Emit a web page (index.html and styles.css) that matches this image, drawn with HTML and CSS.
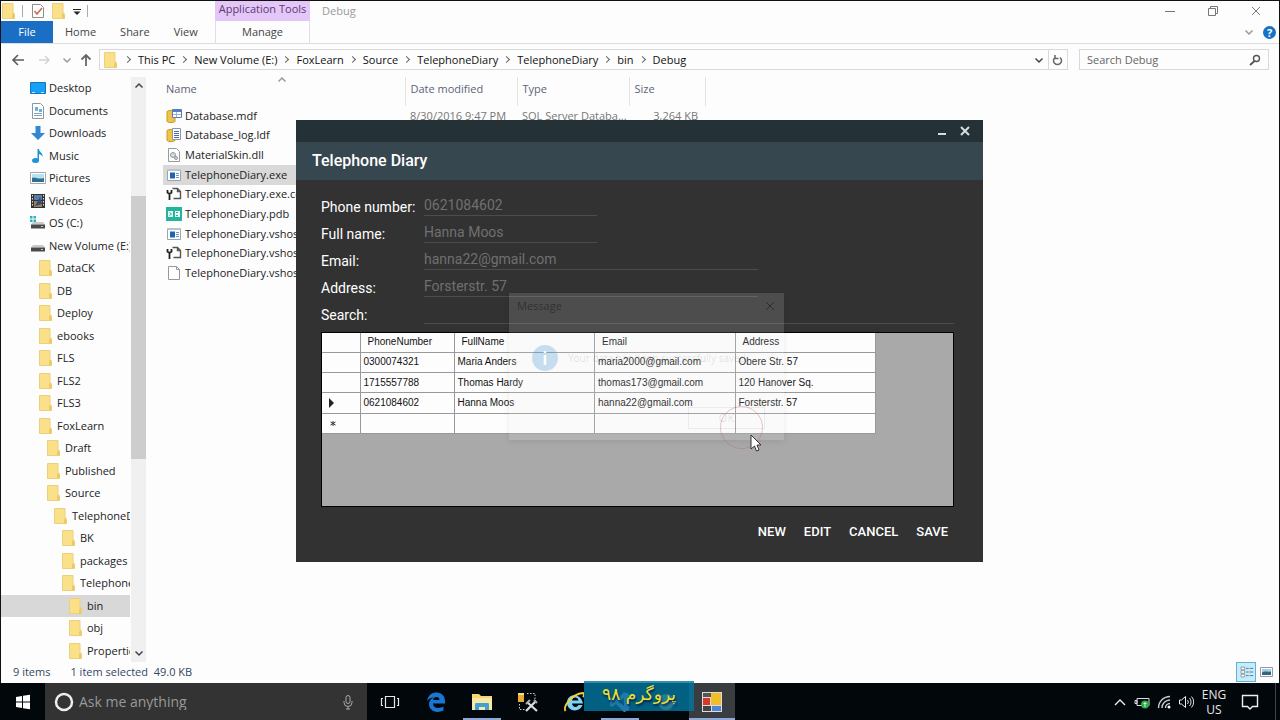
FILE: index.html
```html
<!DOCTYPE html>
<html lang="en">
<head>
    <meta charset="UTF-8">
    <meta name="viewport" content="width=device-width, initial-scale=1.0">
    <title>Telephone Diary</title>
    <link rel="stylesheet" href="styles.css">
</head>
<body>
    <svg class="sprite" aria-hidden="true">
        <symbol id="folder" viewBox="0 0 16 16">
            <path d="M1.500.5h10.500v10l1.500 1.500v3.500h-12z" fill="#fbe08a" stroke="#ecd07c"/>
            <path d="M11 15.500v-4l2-2 .5 1v5z" fill="#edc95f"/>
        </symbol>
        <symbol id="exe" viewBox="0 0 16 16">
            <path d="M1.500 2.500h13v11h-13z" fill="#fff" stroke="#9aa4ae"/>
            <path d="M1 2h14v2H1z" fill="#b9c3cc"/>
            <path d="M4 5.500h5v6H4z" fill="#1c64b4"/>
            <path d="M10 6.500h3M10 8.500h3M10 10.500h3" stroke="#6e94c0"/>
        </symbol>
        <symbol id="config" viewBox="0 0 16 16">
            <path d="M6.500 2.500h5l3 3v7h-7M11.500 2.500v3h3" fill="none" stroke="#555" stroke-width="1.400"/>
            <path d="M1.500 4v2.500l2 1.500 2-1.500V4M3.500 8v6" fill="none" stroke="#222" stroke-width="1.800"/>
        </symbol>
        <symbol id="drive" viewBox="0 0 16 16">
            <path d="M3 7h10l2 2.500H1z" fill="#c9c9c9"/>
            <path d="M1 9.500h14v4H1z" fill="#4a4a4a"/>
            <path d="M11 11h2v1h-2z" fill="#9fe0a0"/>
        </symbol>
        <symbol id="chev" viewBox="0 0 10 10">
            <path d="M1.500 3.500 5 7l3.500-3.500" fill="none" stroke="currentColor" stroke-width="1.500"/>
        </symbol>
        <symbol id="cross" viewBox="0 0 12 12">
            <path d="m2 2 8 8m0-8-8 8" fill="none" stroke="currentColor" stroke-width="var(--w, 1)"/>
        </symbol>
    </svg>

    <main class="explorer">
        <header class="ribbon">
            <div class="quick">
                <svg class="icon"><use href="#folder"/></svg>
                <span class="sep"></span>
                <svg class="icon" viewBox="0 0 16 16"><path d="M2.500 1.500h8l3 3v10h-11z" fill="#fff" stroke="#8d8d8d"/><path d="m4.500 8 2.500 3 5-6" fill="none" stroke="#d4694c" stroke-width="1.600"/></svg>
                <svg class="icon"><use href="#folder"/></svg>
                <svg class="tiny" viewBox="0 0 10 10"><path d="M1 3.500h8" stroke="#222"/><path d="M1.500 5.500h7L5 9z" fill="#222"/></svg>
                <span class="sep"></span>
            </div>
            <div class="context">Application Tools</div>
            <div class="caption">
                <span class="caption-text">Debug</span>
                <button class="winbtn" aria-label="Minimize"><svg class="glyph" viewBox="0 0 12 12"><path d="M1 6.500h10" stroke="#777"/></svg></button>
                <button class="winbtn" aria-label="Restore"><svg class="glyph" viewBox="0 0 12 12"><path d="M1.500 3.500h7v7h-7zM3.500 3.500v-2h7v7h-2" fill="none" stroke="#777"/></svg></button>
                <button class="winbtn" aria-label="Close"><svg class="glyph"><use href="#cross"/></svg></button>
            </div>
            <nav class="tabs">
                <a class="tab tab-file" href="#">File</a>
                <a class="tab" href="#">Home</a>
                <a class="tab" href="#">Share</a>
                <a class="tab" href="#">View</a>
            </nav>
            <a class="manage" href="#">Manage</a>
            <div class="ribbon-end">
                <svg class="tiny soft"><use href="#chev"/></svg>
                <span class="help">?</span>
            </div>
        </header>

        <div class="address-row">
            <svg class="nav-icon" viewBox="0 0 16 16"><path d="M14 8H3m5-5L3 8l5 5" fill="none" stroke="#5c5c5c" stroke-width="1.600"/></svg>
            <svg class="nav-icon" viewBox="0 0 16 16"><path d="M3 8h10M9 4l4 4-4 4" fill="none" stroke="#d2d2d2" stroke-width="1.400"/></svg>
            <svg class="tiny soft nav-drop"><use href="#chev"/></svg>
            <svg class="nav-icon" viewBox="0 0 16 16"><path d="M8 14V3M3.500 7.500 8 3l4.500 4.500" fill="none" stroke="#666" stroke-width="1.800"/></svg>
            <div class="address">
                <svg class="icon"><use href="#folder"/></svg>
                <ol class="crumbs">
                    <li>This PC</li>
                    <li>New Volume (E:)</li>
                    <li>FoxLearn</li>
                    <li>Source</li>
                    <li>TelephoneDiary</li>
                    <li>TelephoneDiary</li>
                    <li>bin</li>
                    <li>Debug</li>
                </ol>
                <svg class="tiny"><use href="#chev"/></svg>
                <button class="refresh" aria-label="Refresh"><svg class="glyph" viewBox="0 0 12 12"><path d="M3 3.500a4 4 0 1 0 5 0M3 1v3.500h3.500" fill="none" stroke="#666" stroke-width="1.500"/></svg></button>
            </div>
            <div class="search">
                <input class="search-input" type="text" placeholder="Search Debug" aria-label="Search Debug">
                <svg class="glyph" viewBox="0 0 12 12"><circle cx="7.500" cy="4.500" r="3" fill="none" stroke="#555" stroke-width="1.400"/><path d="M5.500 7 1 11" stroke="#555" stroke-width="1.800"/></svg>
            </div>
        </div>

        <div class="panes">
            <ul class="tree">
                <li><svg class="icon" viewBox="0 0 16 16"><path d="M.5 2.500h15v11H.5z" fill="#17a0f5" stroke="#1676bd"/><path d="M2 12h3v1H2zM11 12h3v1h-3z" fill="#bfe5ff"/></svg>Desktop</li>
                <li><svg class="icon" viewBox="0 0 16 16"><path d="M2.500.5h8l3 3v12h-11z" fill="#fff" stroke="#8b98a3"/><path d="M5 4h3v4H5zM9 6h3v3H9z" fill="#6cb0dc"/><path d="M4 10.500h8M4 12.500h8" stroke="#7fa4bd"/></svg>Documents</li>
                <li><svg class="icon" viewBox="0 0 16 16"><path d="M5.500 1h5v7H15l-7 7-7-7h4.500z" fill="#3287d3"/></svg>Downloads</li>
                <li><svg class="icon" viewBox="0 0 16 16"><ellipse cx="5.500" cy="12.500" rx="3.500" ry="2.500" fill="#1d92d8"/><path d="M7.500 1h1.500c0 3 4.500 4 3.500 8-.5-2-2-2.500-3.500-3v7H7.500z" fill="#1d92d8"/></svg>Music</li>
                <li><svg class="icon" viewBox="0 0 16 16"><path d="M.5 2.500h15v11H.5z" fill="#fff" stroke="#a1a8ae"/><path d="M2 4h12v8H2z" fill="#b9dff3"/><path d="M2 12V8c3-2 5 2 12 0v4z" fill="#316f92"/></svg>Pictures</li>
                <li><svg class="icon" viewBox="0 0 16 16"><path d="M1 1h14v14H1z" fill="#333"/><path d="M4 2h8v5H4z" fill="#5a7da5"/><path d="M4 8h8v6H4z" fill="#a07d55"/><path d="M2.500 2v12M13.500 2v12" stroke="#ddd" stroke-dasharray="1.500 1.500"/><path d="m5 13 5-9 2 7z" fill="#304b86"/></svg>Videos</li>
                <li><svg class="icon" viewBox="0 0 16 16"><use href="#drive"/><path d="M0 1h2.500v2.500H0zM3.500 1H6v2.500H3.500zM0 4.500h2.500V7H0zM3.500 4.500H6V7H3.500z" fill="#24b3c4"/></svg>OS (C:)</li>
                <li><svg class="icon"><use href="#drive"/></svg>New Volume (E:)</li>
                <li class="l1"><svg class="icon"><use href="#folder"/></svg>DataCK</li>
                <li class="l1"><svg class="icon"><use href="#folder"/></svg>DB</li>
                <li class="l1"><svg class="icon"><use href="#folder"/></svg>Deploy</li>
                <li class="l1"><svg class="icon"><use href="#folder"/></svg>ebooks</li>
                <li class="l1"><svg class="icon"><use href="#folder"/></svg>FLS</li>
                <li class="l1"><svg class="icon"><use href="#folder"/></svg>FLS2</li>
                <li class="l1"><svg class="icon"><use href="#folder"/></svg>FLS3</li>
                <li class="l1"><svg class="icon"><use href="#folder"/></svg>FoxLearn</li>
                <li class="l2"><svg class="icon"><use href="#folder"/></svg>Draft</li>
                <li class="l2"><svg class="icon"><use href="#folder"/></svg>Published</li>
                <li class="l2"><svg class="icon"><use href="#folder"/></svg>Source</li>
                <li class="l3"><svg class="icon"><use href="#folder"/></svg>TelephoneDiary</li>
                <li class="l4"><svg class="icon"><use href="#folder"/></svg>BK</li>
                <li class="l4"><svg class="icon"><use href="#folder"/></svg>packages</li>
                <li class="l4"><svg class="icon"><use href="#folder"/></svg>TelephoneDiary</li>
                <li class="l5 current"><svg class="icon"><use href="#folder"/></svg>bin</li>
                <li class="l5"><svg class="icon"><use href="#folder"/></svg>obj</li>
                <li class="l5"><svg class="icon"><use href="#folder"/></svg>Properties</li>
            </ul>
            <div class="scroll">
                <svg class="tiny up"><use href="#chev"/></svg>
                <div class="scroll-thumb"></div>
                <svg class="tiny down"><use href="#chev"/></svg>
            </div>
            <div class="list">
                <table class="files">
                    <thead>
                        <tr>
                            <th class="col-name">Name<svg class="tiny soft up sort"><use href="#chev"/></svg></th>
                            <th>Date modified</th>
                            <th>Type</th>
                            <th class="col-size">Size</th>
                        </tr>
                    </thead>
                    <tbody>
                        <tr>
                            <td><svg class="icon" viewBox="0 0 16 16"><path d="M1 3.500c2-1.500 6-1.500 8 0v10c-2 1.500-6 1.500-8 0z" fill="#f0c44a" stroke="#c59a28"/><path d="M6.500 1.500h9v8h-9z" fill="#fff" stroke="#5b7cb8"/><path d="M7 2h8v2H7z" fill="#5b7cc8"/><path d="M7 6.500h8M10.500 4v5" stroke="#9db3da"/></svg>Database.mdf</td>
                            <td>8/30/2016 9:47 PM</td><td>SQL Server Databa...</td><td class="size">3,264 KB</td>
                        </tr>
                        <tr><td><svg class="icon" viewBox="0 0 16 16"><path d="M1 3.500c2-1.500 6-1.500 8 0v10c-2 1.500-6 1.500-8 0z" fill="#f0c44a" stroke="#c59a28"/><path d="M6.500 1.500h8v11h-8z" fill="#fff" stroke="#8a97a8"/><path d="M8 4.500h5M8 6.500h5M8 8.500h5M8 10.500h5" stroke="#4e6f9c"/></svg>Database_log.ldf</td><td></td><td></td><td></td></tr>
                        <tr><td><svg class="icon" viewBox="0 0 16 16"><path d="M2.500 1.500h8l3 3v10h-11z" fill="#fff" stroke="#999"/><circle cx="7" cy="8" r="2.500" fill="#d5dade" stroke="#8e999f"/><circle cx="10" cy="11" r="1.500" fill="#d5dade" stroke="#8e999f"/></svg>MaterialSkin.dll</td><td></td><td></td><td></td></tr>
                        <tr class="selected"><td><svg class="icon"><use href="#exe"/></svg>TelephoneDiary.exe</td><td></td><td></td><td></td></tr>
                        <tr><td><svg class="icon"><use href="#config"/></svg>TelephoneDiary.exe.config</td><td></td><td></td><td></td></tr>
                        <tr><td><svg class="icon" viewBox="0 0 16 16"><path d="M0 1h16v14H0z" fill="#22b59b"/><path d="M2 5h5v6H2zM9 5h5v6H9z" fill="#e9fbf7"/><path d="m3.500 6.500 2 1.500-2 1.500M10 6.500h2M10 9.500h2" fill="none" stroke="#22b59b"/></svg>TelephoneDiary.pdb</td><td></td><td></td><td></td></tr>
                        <tr><td><svg class="icon"><use href="#exe"/></svg>TelephoneDiary.vshost.exe</td><td></td><td></td><td></td></tr>
                        <tr><td><svg class="icon"><use href="#config"/></svg>TelephoneDiary.vshost.exe.config</td><td></td><td></td><td></td></tr>
                        <tr><td><svg class="icon" viewBox="0 0 16 16"><path d="M2.500 1.500h8l3 3v10h-11zM10.500 1.500v3h3" fill="#fff" stroke="#999"/></svg>TelephoneDiary.vshost.exe.manifest</td><td></td><td></td><td></td></tr>
                    </tbody>
                </table>
            </div>
        </div>

        <footer class="status">
            <span>9 items</span>
            <span>1 item selected&nbsp; 49.0 KB</span>
            <svg class="view view-on" viewBox="0 0 20 20"><path d="M4.500 4.500h4v3h-4zM4.500 8.500h4v3h-4zM4.500 12.500h4v3h-4z" fill="#fff" stroke="#8894a0"/><path d="M10 6h3m1 0h4M10 10h3m1 0h4M10 14h3m1 0h4" stroke="#51708a"/></svg>
            <svg class="view" viewBox="0 0 20 20"><path d="M4.500 5.500h12v9h-12z" fill="#fff" stroke="#999"/><path d="M6 7h9v3H6z" fill="#9fd0ea"/><path d="M6 10.500c3-2 5 0 9-1V13H6z" fill="#2e6480"/></svg>
        </footer>
    </main>

    <section class="diary">
        <div class="diary-bar">
            <button class="barbtn" aria-label="Minimize"><svg class="glyph" viewBox="0 0 12 12"><path d="M2 9h8" stroke="#d6dcdf" stroke-width="2"/></svg></button>
            <button class="barbtn" aria-label="Close"><svg class="glyph"><use href="#cross"/></svg></button>
        </div>
        <h1 class="diary-title">Telephone Diary</h1>
        <form class="diary-body">
            <div class="fields">
                <label for="phone">Phone number:</label>
                <input class="field short" id="phone" type="text" value="0621084602">
                <label for="fullname">Full name:</label>
                <input class="field short" id="fullname" type="text" value="Hanna Moos">
                <label for="email">Email:</label>
                <input class="field medium" id="email" type="text" value="hanna22@gmail.com">
                <label for="address">Address:</label>
                <input class="field medium" id="address" type="text" value="Forsterstr. 57">
                <label for="find">Search:</label>
                <input class="field" id="find" type="text">
            </div>
            <div class="records">
                <table class="grid">
                    <thead>
                        <tr><th class="mark"></th><th class="c-phone">PhoneNumber</th><th>FullName</th><th>Email</th><th>Address</th></tr>
                    </thead>
                    <tbody>
                        <tr><td></td><td>0300074321</td><td>Maria Anders</td><td>maria2000@gmail.com</td><td>Obere Str. 57</td></tr>
                        <tr><td></td><td>1715557788</td><td>Thomas Hardy</td><td>thomas173@gmail.com</td><td>120 Hanover Sq.</td></tr>
                        <tr><td class="marker"><svg class="tiny" viewBox="0 0 10 10"><path d="M3 0v10l5-5z" fill="#222"/></svg></td><td>0621084602</td><td>Hanna Moos</td><td>hanna22@gmail.com</td><td>Forsterstr. 57</td></tr>
                        <tr><td class="marker"><svg class="tiny" viewBox="0 0 10 10"><path d="M7 3v5M4.500 4l5 3M9.500 4l-5 3" stroke="#333"/></svg></td><td></td><td></td><td></td><td></td></tr>
                    </tbody>
                </table>
            </div>
            <div class="actions">
                <button class="action" type="button">NEW</button>
                <button class="action" type="button">EDIT</button>
                <button class="action" type="button">CANCEL</button>
                <button class="action" type="button">SAVE</button>
            </div>
        </form>
    </section>

    <!-- message box while it fades out -->
    <div class="message">
        <div class="message-head">
            <span>Message</span>
            <svg class="glyph"><use href="#cross"/></svg>
        </div>
        <div class="message-body">
            <svg class="info" viewBox="0 0 26 26"><circle cx="13" cy="13" r="13" fill="#3f94d6" fill-opacity=".28"/><path d="M13 6v2M13 10v10" stroke="#fff" stroke-width="2.500"/></svg>
            <span>Your data has been successfully saved.</span>
        </div>
        <button class="message-ok" type="button">OK</button>
    </div>
    <span class="ripple"></span>
    <svg class="cursor" viewBox="0 0 12 18"><path d="M1 1v14l3.500-3 2 5 2.500-1-2-5h4z" fill="#fff" stroke="#333"/></svg>

    <div class="taskbar">
        <button class="start" aria-label="Start"><svg class="big" viewBox="0 0 20 20"><path d="m3 5 6-1v5.500H3zM10 3.800l7-1v6.700h-7zM3 10.500h6V16l-6-1zM10 10.500h7v6.700l-7-1z" fill="#fff"/></svg></button>
        <div class="cortana">
            <svg class="big" viewBox="0 0 20 20"><circle cx="10" cy="10" r="8" fill="none" stroke="#eee" stroke-width="2.500"/></svg>
            <input class="cortana-input" type="text" placeholder="Ask me anything" aria-label="Ask me anything">
            <svg class="icon" viewBox="0 0 16 16"><rect x="6" y="1.500" width="4" height="8" rx="2" fill="none" stroke="#aaa"/><path d="M4 7v1.500a4 4 0 0 0 8 0V7M8 12.500V15M6 15h4" fill="none" stroke="#aaa"/></svg>
        </div>
        <button class="task" aria-label="Task view"><svg class="big" viewBox="0 0 20 20"><path d="M5.500 4.500h9v11h-9zM3 6.500H1.500v7H3M17 6.500h1.500v7H17" fill="none" stroke="#e5e5e5" stroke-width="1.200"/></svg></button>
        <button class="task" aria-label="Edge"><svg class="big" viewBox="0 0 20 20"><path d="M1 9C2 3 6 .5 10.500.5c5 0 8.500 3.500 8.500 8.500v2.500H7c.3 5 6 5.500 10.500 3v4C10 22 3 18.500 3 12c0-3 2-5.500 5-6.500C5 5.500 2.500 7 1 9zm6-1h6.500c0-4-6-4-6.500 0z" fill="#1777d2"/></svg></button>
        <button class="task open" aria-label="File Explorer"><svg class="big" viewBox="0 0 20 20"><path d="M0 2h7l2 2h11v14H0z" fill="#f6d674"/><path d="M0 6h20v12H0z" fill="#fbe9a3"/><path d="M3 18v-5.500c0-1 .5-1.500 1.500-1.500h11c1 0 1.500.5 1.500 1.500V18h-4v-3H7v3z" fill="#3fa2d3"/></svg></button>
        <button class="task" aria-label="Tools"><svg class="big" viewBox="0 0 20 20"><path d="M0 1h6v9H0z" fill="#e8aa35"/><path d="M0 1h6v2H0z" fill="#f8dd8f"/><path d="M9 1.500h8v6M1.500 12v5.500h6" fill="none" stroke="#ccc" stroke-dasharray="1.500 1.500"/><path d="m9 10 10 9M18 9 8 19" stroke="#ddd" stroke-width="2.200"/><path d="m8 12 4-4M16 8l3 3" stroke="#aaa" stroke-width="2"/></svg></button>
        <button class="task" aria-label="Internet Explorer"><svg class="big" viewBox="0 0 20 20"><path d="M19 11.500H8c.5 4 5 4.500 6.500 1.500h4C16 21 3 20 3 10.500S17 0 19 11.500zM8 8.500h6.500c-.5-4-6-4-6.500 0z" fill="#7fd4f5"/><path d="M1.500 19C-1 15 7 2 19 1c1 0 1.500 2 0 4" fill="none" stroke="#f2cf3c" stroke-width="1.800"/></svg></button>
        <button class="task open" aria-label="Visual Studio"><svg class="big" viewBox="0 0 20 20"><path d="M14 0 6 8 2 5 0 6v8l2 1 4-3 8 8 5-2V2zm0 6v8l-5-4zM2 8l2 2-2 2z" fill="#9a86e0"/></svg></button>
        <button class="task" aria-label="Paint"><svg class="big" viewBox="0 0 20 20"><circle cx="10" cy="10" r="8" fill="#c8a068"/></svg></button>
        <button class="task open active" aria-label="Telephone Diary"><svg class="big" viewBox="0 0 20 20"><path d="M0 0h20v20H0z" fill="#ddd"/><path d="M1 1h8v4H1z" fill="#555"/><path d="M1 6h7v7H1z" fill="#d33a2e"/><path d="M9 1h10v12H9z" fill="#f2bd2b"/><path d="M1 14h8v5H1z" fill="#444"/><path d="M10 14h9v5h-9z" fill="#4f86d9"/></svg></button>
        <div class="tray">
            <svg class="icon" viewBox="0 0 16 16"><path d="m3 11 5-5 5 5" fill="none" stroke="#eee" stroke-width="1.400"/></svg>
            <svg class="icon" viewBox="0 0 16 16"><path d="M3 4.500h12v7H3zM1 6.500h2v3H1z" fill="none" stroke="#ddd"/><circle cx="11" cy="10.500" r="4" fill="#2eaa4a"/><path d="M11 8v5M9.500 9.500h3" stroke="#c9ffd2"/></svg>
            <svg class="icon" viewBox="0 0 16 16"><path d="M2.500 14A11.500 11.500 0 0 1 14 2.500M6 14a8 8 0 0 1 8-8M9.500 14A4.500 4.500 0 0 1 14 9.500" fill="none" stroke="#ccc" stroke-width="1.400"/><circle cx="13" cy="13" r="1.500" fill="#fff"/></svg>
            <svg class="icon" viewBox="0 0 16 16"><path d="M1.500 6h2l4-3.500v11L3.500 10h-2z" fill="none" stroke="#eee"/><path d="M9.500 6a3 3 0 0 1 0 4M11.500 4a6 6 0 0 1 0 8M13.500 2.500a8 8 0 0 1 0 11" fill="none" stroke="#ddd"/></svg>
            <span class="lang">ENG<br>US</span>
            <svg class="big" viewBox="0 0 20 20"><path d="M2.500 3.500h15v11h-5L10 17l-2.500-2.500h-5z" fill="none" stroke="#eee" stroke-width="1.400"/></svg>
        </div>
    </div>
    <div class="stamp" dir="rtl" lang="fa">پروگرم ۹۸</div>
</body>
</html>
```
FILE: styles.css
```css
* {
    margin: 0;
    padding: 0;
    box-sizing: border-box;
}

body {
    display: flex;
    flex-direction: column;
    height: 100vh;
    overflow: hidden;
    position: relative;
    background: #fdfdfd;
    color: #222;
    font: 11px/16px 'Open Sans', 'Noto Sans', sans-serif;
}

ul, ol {
    list-style: none;
}

a {
    color: inherit;
    text-decoration: none;
}

button {
    background: none;
    border: none;
    color: inherit;
    font: inherit;
}

input {
    background: none;
    border: none;
    outline: none;
    font: inherit;
    min-width: 0;
}

.sprite {
    position: absolute;
    width: 0;
    height: 0;
}

.icon, .nav-icon {
    width: 16px;
    height: 16px;
    flex: none;
}

.tiny {
    width: 10px;
    height: 10px;
    flex: none;
    color: #444;
}

.soft {
    color: #999;
}

.glyph {
    width: 12px;
    height: 12px;
    display: block;
    flex: none;
}

.big {
    width: 20px;
    height: 20px;
    display: block;
    flex: none;
}

.up {
    transform: rotate(180deg);
}

/* explorer */
.explorer {
    flex: 1;
    min-height: 0;
    display: flex;
    flex-direction: column;
    border: 1px solid #111;
    border-bottom: none;
}

.ribbon {
    display: grid;
    grid-template-columns: 214px 95px 1fr;
    grid-template-rows: 20px 22px;
    border-bottom: 1px solid #ddd;
    color: #444;
}

.quick {
    display: flex;
    align-items: center;
    gap: 5px;
}

.sep {
    width: 1px;
    height: 12px;
    margin-right: 2px;
    background: #aaa;
}

.context {
    background: #e5c6f8;
    color: #5a3c70;
    text-align: center;
    white-space: nowrap;
}

.caption {
    display: flex;
    align-items: center;
    padding-right: 2px;
}

.caption-text {
    flex: 1;
    padding-left: 12px;
    color: #999;
}

.winbtn {
    width: 43px;
    display: flex;
    justify-content: center;
    color: #777;
}

.tabs {
    display: flex;
    line-height: 22px;
}

.tab {
    padding: 0 12px;
}

.tab-file {
    width: 52px;
    padding: 0;
    background: #1a6fc4;
    color: #fff;
    text-align: center;
}

.manage {
    border: 1px solid #e2dce6;
    border-width: 0 1px;
    line-height: 22px;
    text-align: center;
}

.ribbon-end {
    display: flex;
    align-items: center;
    justify-content: flex-end;
    gap: 9px;
    padding-right: 3px;
}

.help {
    width: 13px;
    height: 13px;
    border-radius: 50%;
    background: #1673c4;
    color: #fff;
    font-weight: 700;
    line-height: 13px;
    text-align: center;
}

.address-row {
    display: flex;
    align-items: center;
    height: 33px;
    padding: 0 10px 2px 9px;
}

.nav-icon {
    margin-right: 10px;
}

.nav-drop {
    margin-right: 6px;
}

.nav-drop + .nav-icon {
    margin-right: 5px;
}

.address {
    flex: 1;
    display: flex;
    align-items: center;
    height: 21px;
    border: 1px solid #d9d9d9;
    padding-left: 3px;
}

.crumbs {
    flex: 1;
    display: flex;
    color: #111;
    white-space: nowrap;
}

.crumbs li::before {
    content: '';
    display: inline-block;
    width: 4px;
    height: 4px;
    margin: 0 8px 2px 6px;
    border: solid #666;
    border-width: 1px 1px 0 0;
    transform: rotate(45deg);
}

.refresh {
    height: 19px;
    width: 19px;
    display: flex;
    align-items: center;
    justify-content: center;
    margin-left: 4px;
    border-left: 1px solid #d9d9d9;
}

.search {
    display: flex;
    align-items: center;
    width: 190px;
    height: 21px;
    margin-left: 11px;
    padding: 0 7px;
    border: 1px solid #d9d9d9;
}

.search-input {
    flex: 1;
}

.search-input::placeholder {
    color: #666;
    opacity: 1;
}

.panes {
    flex: 1;
    min-height: 0;
    display: flex;
}

.tree {
    width: 129px;
    display: grid;
    grid-auto-rows: 1fr;
    overflow: hidden;
}

.tree li {
    display: flex;
    align-items: center;
    gap: 3px;
    min-width: 0;
    padding-left: 29px;
    white-space: nowrap;
    overflow: hidden;
}

.tree .l1 { padding-left: 37px; }
.tree .l2 { padding-left: 45px; }
.tree .l3 { padding-left: 52px; }
.tree .l4 { padding-left: 60px; }
.tree .l5 { padding-left: 67px; }

.tree .current {
    background: #d8d8d8;
}

.scroll {
    width: 15px;
    margin-left: 1px;
    display: grid;
    grid-template-rows: 10px 105fr 263fr 189fr 10px;
    justify-items: center;
    padding: 4px 0;
    background: #f0f0f0;
}

.scroll-thumb {
    grid-row: 3;
    width: 15px;
    background: #cdcdcd;
}

.down {
    grid-row: 5;
}

.list {
    flex: 1;
    padding-left: 17px;
}

.files {
    width: 542px;
    height: 206px;
    table-layout: fixed;
    border-collapse: collapse;
}

.files th {
    position: relative;
    width: 112px;
    height: 29px;
    padding: 0 0 5px 5px;
    border-right: 1px solid #e2e2e2;
    color: #5b6478;
    font-weight: 400;
    text-align: left;
}

.files .col-name {
    width: 242px;
    padding-left: 3px;
}

.files .col-size {
    width: 76px;
}

.sort {
    position: absolute;
    top: -2px;
    left: 47%;
}

.files td {
    padding: 0 0 0 5px;
    color: #777;
    white-space: nowrap;
    overflow: hidden;
}

.files td:first-child {
    padding-left: 3px;
    color: #222;
}

.files td .icon {
    margin-right: 3px;
    vertical-align: top;
}

.files .size {
    padding-right: 7px;
    text-align: right;
}

.selected {
    background: #d9d9d9;
}

.status {
    display: flex;
    align-items: center;
    gap: 20px;
    height: 21px;
    padding: 0 3px 2px 12px;
    color: #35475f;
}

.view {
    width: 20px;
    height: 20px;
}

.view-on {
    margin-left: auto;
    margin-right: -20px;
    background: #c5ecf8;
    border: 1px solid #5fb4d0;
}

/* telephone diary window */
.diary {
    position: absolute;
    left: 296px;
    top: 120px;
    width: 687px;
    background: #323232;
    color: #fff;
    font: 14px/18px Roboto, sans-serif;
}

.diary-bar {
    display: flex;
    align-items: center;
    justify-content: flex-end;
    gap: 11px;
    height: 22px;
    padding-right: 12px;
    background: #243238;
}

.barbtn {
    --w: 2;
    color: #d6dcdf;
}

.diary-title {
    height: 38px;
    padding-left: 16px;
    background: #37474f;
    font-size: 16px;
    font-weight: 500;
    line-height: 38px;
}

.diary-body {
    padding: 9px 29px 20px 25px;
}

.fields {
    display: grid;
    grid-template-columns: 103px 1fr;
    grid-auto-rows: 27px;
    align-items: end;
}

.field {
    height: 20px;
    padding-bottom: 1px;
    border-bottom: 1px solid #4c4c4c;
    color: #707070;
}

.short {
    width: 173px;
}

.medium {
    width: 334px;
}

.records {
    height: 175px;
    margin-top: 8px;
    border: 1px solid #000;
    background: #a9a9a9;
}

.grid {
    width: 554px;
    height: 101px;
    table-layout: fixed;
    border-collapse: collapse;
    background: #fdfdfd;
    color: #111;
    font: 10px/14px 'Liberation Sans', Arial, sans-serif;
}

.grid th, .grid td {
    height: 20px;
    padding-left: 3px;
    border-right: 1px solid #999;
    border-bottom: 1px solid #999;
    text-align: left;
}

.grid th {
    padding-left: 7px;
    height: 19px;
    font-weight: 400;
}

.grid .mark {
    width: 38px;
}

.grid .c-phone {
    width: 94px;
}

.grid .marker {
    padding-left: 4px;
}

.grid .tiny {
    display: block;
}

.actions {
    display: flex;
    justify-content: flex-end;
    gap: 18px;
    padding-right: 6px;
    margin-top: 15px;
}

.action {
    font-size: 13px;
    font-weight: 500;
    line-height: 20px;
}

/* fading message box */
.message {
    position: absolute;
    left: 509px;
    top: 293px;
    width: 275px;
    height: 147px;
    display: flex;
    flex-direction: column;
    background: rgba(235, 235, 235, 0.15);
    box-shadow: 0 2px 6px rgba(0, 0, 0, 0.08);
    color: rgba(0, 0, 0, 0.4);
}

.message-head {
    display: flex;
    align-items: center;
    justify-content: space-between;
    padding: 5px 8px;
}

.message-body {
    flex: 1;
    display: flex;
    align-items: center;
    gap: 10px;
    padding: 0 0 10px 23px;
    color: rgba(0, 0, 0, 0.12);
    font-size: 10px;
    white-space: nowrap;
}

.info {
    width: 26px;
    height: 26px;
}

.message-ok {
    align-self: flex-end;
    width: 77px;
    height: 22px;
    margin: 0 19px 11px 0;
    border: 1px solid rgba(0, 0, 0, 0.06);
    color: rgba(0, 0, 0, 0.12);
}

.ripple {
    position: absolute;
    left: 720px;
    top: 406px;
    width: 43px;
    height: 43px;
    border: 1px solid rgba(190, 90, 110, 0.35);
    border-radius: 50%;
}

.cursor {
    position: absolute;
    left: 750px;
    top: 434px;
    width: 12px;
    height: 18px;
}

/* taskbar */
.taskbar {
    display: flex;
    height: 37px;
    background: #02070c;
    color: #e8e8e8;
}

.start {
    width: 45px;
    display: flex;
    align-items: center;
    justify-content: center;
}

.cortana {
    display: flex;
    align-items: center;
    gap: 4px;
    width: 322px;
    padding: 0 11px 0 9px;
    background: #333;
    font-size: 14px;
}

.cortana-input {
    flex: 1;
    padding-left: 1px;
}

.cortana-input::placeholder {
    color: #999;
    opacity: 1;
}

.task {
    width: 46px;
    display: flex;
    align-items: center;
    justify-content: center;
}

.open {
    background: linear-gradient(#8fa8d8, #8fa8d8) bottom / 38px 2px no-repeat;
}

.active {
    background-color: #3a3d40;
    background-size: 100% 2px;
}

.tray {
    flex: 1;
    display: flex;
    align-items: center;
    justify-content: flex-end;
    gap: 6px;
    margin-right: 4px;
    padding-right: 15px;
    border-right: 1px solid #444;
}

.lang {
    width: 28px;
    margin-right: 6px;
    font-size: 12px;
    line-height: 15px;
    text-align: center;
}

.stamp {
    position: absolute;
    left: 584px;
    top: 681px;
    width: 110px;
    height: 30px;
    background: rgba(3, 117, 158, 0.82);
    color: #f0e030;
    font: 17px/26px 'DejaVu Sans', sans-serif;
    text-align: center;
    text-shadow: 1px 2px 2px #024;
}
```
